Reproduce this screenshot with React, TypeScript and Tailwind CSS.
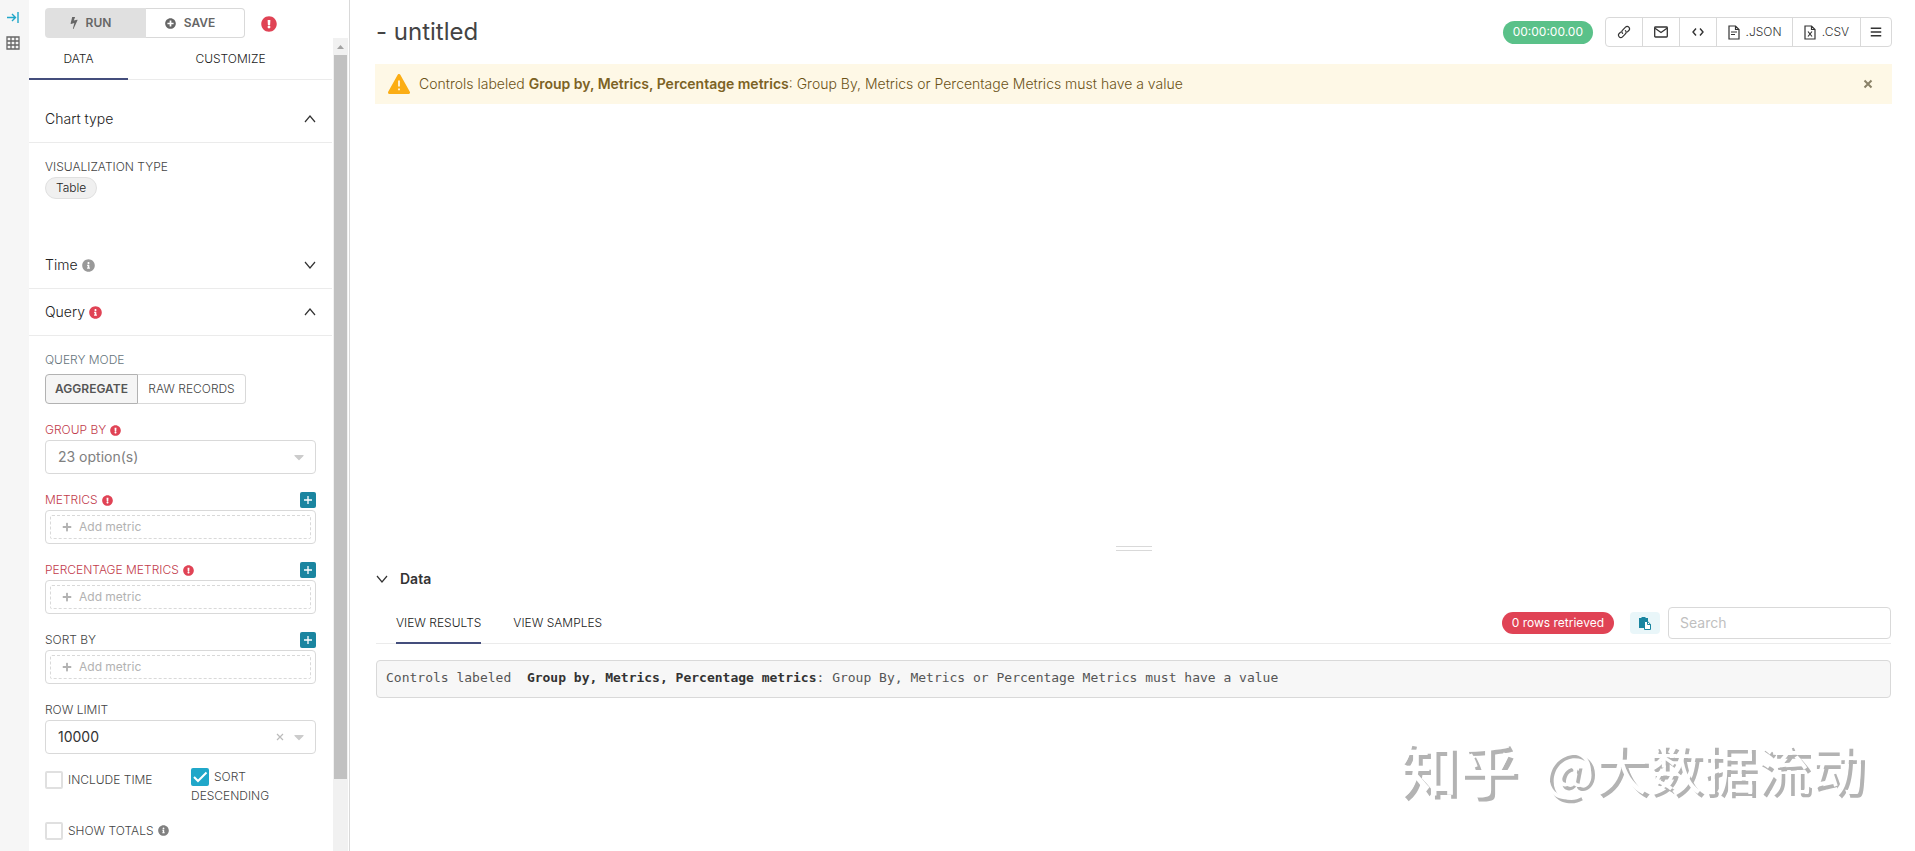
import type { ReactNode } from "react";
import { FaBars, FaCaretDown, FaExclamationCircle, FaInfoCircle, FaPlus, FaPlusCircle } from "react-icons/fa";

type ChevronProps = { up?: boolean };

function Chevron({ up }: ChevronProps) {
	return (
		<svg width="12" height="12" viewBox="0 0 12 12" fill="none" stroke="#333" strokeWidth="1.2">
			<path d={up ? "M1 9 6 3l5 6" : "M1 3l5 6 5-6"} />
		</svg>
	);
}

function BoltIcon() {
	return (
		<svg width="8" height="12" viewBox="0 0 8 12" fill="currentColor">
			<path d="M2.2 0h2.9L3.8 3.6l3.3-.8c.3-.1.5.2.4.5L3.6 11.8c-.1.3-.8.2-.7-.1l1.4-5.6-3.2.8c-.3.1-.6-.2-.5-.5L2.2 0Z" />
		</svg>
	);
}

function LinkIcon() {
	return (
		<svg width="14" height="14" viewBox="0 0 14 14" fill="none" stroke="currentColor" strokeWidth="1.2" strokeLinecap="round">
			<path d="M5.6 8.4c-1-1-1-2.3 0-3.3l2.9-2.9c1-1 2.4-1 3.3 0s1 2.3 0 3.3L10.4 6.9" />
			<path d="M8.4 5.6c1 1 1 2.3 0 3.3l-2.9 2.9c-1 1-2.4 1-3.3 0s-1-2.3 0-3.3L3.6 7.1" />
		</svg>
	);
}

function MailIcon() {
	return (
		<svg width="14" height="12" viewBox="0 0 14 12" fill="none" stroke="currentColor" strokeWidth="1.3">
			<rect x="0.7" y="1" width="12.6" height="10" rx="0.8" />
			<path d="m1 2.2 6 4.3 6-4.3" />
		</svg>
	);
}

function CodeIcon() {
	return (
		<svg width="14" height="10" viewBox="0 0 14 10" fill="none" stroke="currentColor" strokeWidth="1.4">
			<path d="M5 1.5 2 5l3 3.5M9 1.5 12 5 9 8.5" />
		</svg>
	);
}

function FileIcon({ children }: { children: ReactNode }) {
	return (
		<svg width="12" height="15" viewBox="0 0 12 15" fill="none" stroke="currentColor" strokeWidth="1.2">
			<path d="M1 1h6.5L11 4.5V14H1V1ZM7.5 1v3.5H11" />
			{children}
		</svg>
	);
}

function PasteIcon() {
	return (
		<svg width="12" height="13" viewBox="0 0 12 13">
			<path d="M0 1h2.5V0h4v1H9v10H0V1Z" fill="currentColor" />
			<path d="M5.5 4.5h3.200l2.800 2.800v5.200h-6v-8Z" fill="#fff" stroke="currentColor" />
			<path d="M8.500 4.500v3h3" fill="none" stroke="currentColor" />
		</svg>
	);
}

function WarningIcon() {
	return (
		<svg width="22" height="20" viewBox="0 0 22 20">
			<path d="M11 1.5 20.5 18.5h-19L11 1.5Z" fill="#fbad14" stroke="#fbad14" strokeWidth="3" strokeLinejoin="round" />
			<path d="M11 6.5v6M11 14.5v1.8" stroke="#fff" strokeWidth="1.6" />
		</svg>
	);
}

type SectionProps = { title: string; open?: boolean; icon?: ReactNode };

function SectionHeader({ title, open, icon }: SectionProps) {
	return (
		<button className="flex h-[47px] w-full items-center justify-between border-b border-[#ebebeb] px-4 text-sm text-[#222]">
			<span className="flex items-center gap-1">
				{title}
				{icon}
			</span>
			<Chevron up={open} />
		</button>
	);
}

function ErrorDot() {
	return <FaExclamationCircle className="size-[11px] text-[#e04355]" />;
}

type MetricProps = { label: string; error?: boolean };

function MetricControl({ label, error }: MetricProps) {
	return (
		<div className="mb-4">
			<div className="flex h-5 items-center justify-between">
				<span className={error ? "flex items-center gap-1 text-[#c23b4c]" : "text-[#444]"}>
					{label}
					{error && <ErrorDot />}
				</span>
				<button aria-label={`Add ${label}`} className="flex size-4 items-center justify-center rounded-xs bg-[#1a85a0] text-white">
					<svg width="8" height="8" viewBox="0 0 8 8" stroke="currentColor" strokeWidth="1.3">
						<path d="M4 0v8M0 4h8" />
					</svg>
				</button>
			</div>
			<div className="h-[34px] rounded-sm border border-[#d9d9d9] p-1">
				<button className="flex h-full w-full items-center gap-[7px] rounded-xs border border-dashed border-[#d9d9d9] px-[11px] font-normal text-[#b2b2b2]">
					<FaPlus className="size-[10px]" />
					Add metric
				</button>
			</div>
		</div>
	);
}

type CheckProps = { id: string; label: string; checked?: boolean; icon?: ReactNode };

function CheckControl({ id, label, checked, icon }: CheckProps) {
	return (
		<div className="text-[#444]">
			<span className="relative mr-[5px] inline-block size-[18px] align-middle">
				<input
					id={id}
					type="checkbox"
					defaultChecked={checked}
					className="block size-[18px] appearance-none rounded-xs border-2 border-[#e0e0e0] bg-white checked:border-[#20a7c9] checked:bg-[#20a7c9]"
				/>
				{checked && (
					<svg className="pointer-events-none absolute inset-0" width="18" height="18" viewBox="0 0 18 18" fill="none" stroke="#fff" strokeWidth="2">
						<path d="m3 9 4 4 8.5-8.5" />
					</svg>
				)}
			</span>
			<label htmlFor={id} className="align-middle">
				{label}
			</label>
			{icon}
		</div>
	);
}

function ControlPanel() {
	return (
		<aside className="flex w-[321px] shrink-0 flex-col border-r border-[#d9d9d9] bg-white text-xs">
			<div className="flex h-[38px] shrink-0 items-end pl-4">
				<div className="flex h-[30px] font-semibold text-[#666]">
					<button className="flex w-[101px] items-center justify-center gap-2 rounded-l-sm bg-[#e0e0e0] pr-[10px]">
						<BoltIcon />
						RUN
					</button>
					<button className="flex w-[99px] items-center justify-center gap-2 rounded-r-sm border border-l-0 border-[#d9d9d9] pr-[10px]">
						<FaPlusCircle className="size-[11px]" />
						SAVE
					</button>
				</div>
				<FaExclamationCircle className="mb-[6px] ml-4 size-4 text-[#e04355]" />
			</div>

			<div className="flex min-h-0 flex-1">
				<div className="min-w-0 flex-1 overflow-hidden pr-px">
					<div className="flex h-[42px] border-b border-[#ebebeb] text-[#222]">
						<button className="-mb-px w-[99px] border-b-2 border-[#444e7c] pt-[2px]">DATA</button>
						<button className="-mb-px ml-[53px] w-[99px] border-b-2 border-transparent pt-[2px]">CUSTOMIZE</button>
					</div>

					<div className="pt-4">
						<SectionHeader title="Chart type" open />
						<div className="h-[99px] px-4 pt-[15px] text-[#444]">
							<div className="mb-px leading-[18px]">VISUALIZATION TYPE</div>
							<button className="h-[22px] rounded-full border border-[#e0e0e0] bg-[#f0f0f0] px-[10px] text-[#222]">Table</button>
						</div>
						<SectionHeader title="Time" icon={<FaInfoCircle className="size-[13px] text-[#999]" />} />
						<SectionHeader title="Query" open icon={<FaInfoCircle className="size-[13px] text-[#e04355]" />} />
					</div>

					<div className="px-4 pt-[15px]">
						<div className="leading-[18px] text-[#66747c]">QUERY MODE</div>
						<div className="mt-[5px] mb-4 flex h-[30px] w-[201px] text-[#444]">
							<button className="w-[93px] rounded-l-sm border border-[#b2b2b2] bg-[#f5f5f5] font-semibold text-[#555]">AGGREGATE</button>
							<button className="flex-1 rounded-r-sm border border-l-0 border-[#d9d9d9]">RAW RECORDS</button>
						</div>

						<label htmlFor="group-by" className="flex h-5 items-center gap-1 text-[#c23b4c]">
							GROUP BY
							<ErrorDot />
						</label>
						<div className="mb-4 flex h-[34px] items-center rounded-sm border border-[#d9d9d9] pr-2 pl-3 text-sm">
							<select id="group-by" className="min-w-0 flex-1 appearance-none font-normal text-[#808080]">
								<option>23 option(s)</option>
							</select>
							<FaCaretDown className="size-4 text-[#ccc]" />
						</div>

						<MetricControl label="METRICS" error />
						<MetricControl label="PERCENTAGE METRICS" error />
						<MetricControl label="SORT BY" />

						<label htmlFor="row-limit" className="flex h-5 items-center text-[#444]">
							ROW LIMIT
						</label>
						<div className="mb-[13px] flex h-[34px] items-center rounded-sm border border-[#d9d9d9] pr-2 pl-3 text-sm">
							<select id="row-limit" className="min-w-0 flex-1 appearance-none font-normal text-[#333]">
								<option>10000</option>
							</select>
							<button aria-label="Clear row limit" className="mr-[7px] text-[#bbb]">
								<svg width="8" height="8" viewBox="0 0 8 8" stroke="currentColor" strokeWidth="1.2">
									<path d="m1 1 6 6M7 1 1 7" />
								</svg>
							</button>
							<FaCaretDown className="size-4 text-[#ccc]" />
						</div>

						<div className="mb-[18px] grid grid-cols-[146px_96px] leading-[17px]">
							<div className="pt-[3px]">
								<CheckControl id="include-time" label="INCLUDE TIME" />
							</div>
							<CheckControl id="sort-desc" label="SORT DESCENDING" checked />
						</div>
						<CheckControl
							id="show-totals"
							label="SHOW TOTALS"
							icon={<FaInfoCircle className="ml-1 inline-block size-[11px] text-[#808080]" />}
						/>
					</div>
				</div>

				<div className="flex w-[15px] shrink-0 flex-col bg-[#f1f1f1] px-px">
					<div className="flex h-[17px] shrink-0 items-center justify-center">
						<svg width="7" height="4" viewBox="0 0 7 4" fill="#a3a3a3">
							<path d="M3.5 0 7 4H0Z" />
						</svg>
					</div>
					<div className="min-h-0 flex-1">
						<div className="h-[91%] bg-[#c1c1c1]" />
					</div>
				</div>
				<div className="w-px shrink-0" />
			</div>
		</aside>
	);
}

function Toolbar() {
	const button = "flex items-center justify-center gap-[6px] border-r border-[#d9d9d9]";
	return (
		<div className="flex h-[30px] w-[287px] rounded-sm border border-[#d9d9d9] text-xs text-[#333]">
			<button aria-label="Copy link" className={`${button} w-[37px]`}>
				<LinkIcon />
			</button>
			<button aria-label="Email" className={`${button} w-[37px]`}>
				<MailIcon />
			</button>
			<button aria-label="Embed code" className={`${button} w-[37px]`}>
				<CodeIcon />
			</button>
			<button className={`${button} w-[76px]`}>
				<FileIcon>
					<path d="M3 7h6M3 9.5h4" />
				</FileIcon>
				.JSON
			</button>
			<button className={`${button} w-[68px]`}>
				<FileIcon>
					<path d="m4 6.5 4 5M8 6.5l-4 5" />
				</FileIcon>
				.CSV
			</button>
			<button aria-label="Menu" className="flex flex-1 items-center justify-center">
				<FaBars className="size-3" />
			</button>
		</div>
	);
}

function ResultsPanel() {
	return (
		<section className="pr-px">
			<button className="flex items-center gap-3 text-sm leading-5 font-semibold text-[#333]">
				<Chevron />
				Data
			</button>
			<div className="mt-[15px] flex h-10 items-stretch border-b border-[#ebebeb] text-xs text-[#222]">
				<div className="-mb-px ml-5 flex gap-8">
					<button className="border-b-2 border-[#444e7c]">VIEW RESULTS</button>
					<button className="border-b-2 border-transparent">VIEW SAMPLES</button>
				</div>
				<div className="ml-auto flex items-start">
					<span className="mt-[8px] flex h-[22px] items-center rounded-full bg-[#e04355] px-[10px] font-normal text-white">0 rows retrieved</span>
					<button aria-label="Copy to clipboard" className="mt-[8px] mr-2 ml-4 flex h-[22px] w-[30px] items-center justify-center rounded-sm bg-[#e9f6f9] text-[#1a85a0]">
						<PasteIcon />
					</button>
					<input
						type="text"
						aria-label="Search"
						placeholder="Search"
						className="mt-[3px] h-8 w-[223px] rounded-sm border border-[#d9d9d9] px-[11px] pb-px text-sm font-normal placeholder:text-[#bfbfbf]"
					/>
				</div>
			</div>
			<pre className="mt-4 rounded-sm border border-[#d9d9d9] bg-[#f7f7f7] px-[9px] pt-[7px] pb-[9px] font-['DejaVu_Sans_Mono',monospace] text-[13px] leading-5 text-[#555]">
				{"Controls labeled  "}
				<strong className="font-bold text-[#333]">Group by, Metrics, Percentage metrics</strong>
				{": Group By, Metrics or Percentage Metrics must have a value"}
			</pre>
		</section>
	);
}

export default function App() {
	return (
		<div className="relative flex h-screen overflow-hidden bg-white font-['Inter','Noto_Sans_CJK_SC',sans-serif] font-light">
			<nav className="flex w-[29px] shrink-0 flex-col bg-[#f6f6f6] pt-[10px] pl-[6px]">
				<button aria-label="Expand dataset panel" className="h-[26px] text-[#20a7c9]">
					<svg className="mb-3" width="13" height="12" viewBox="0 0 13 12" fill="none" stroke="currentColor" strokeWidth="1.4">
						<path d="M1 6.5h8M6 3l3.5 3.5L6 10M12 1v11" />
					</svg>
				</button>
				<button aria-label="Dataset" className="text-[#666]">
					<svg width="14" height="14" viewBox="0 0 14 14" fill="none" stroke="currentColor" strokeWidth="1.3">
						<path d="M1 1h12v12H1ZM5 1v12M9 1v12M1 5h12M1 9h12" />
					</svg>
				</button>
			</nav>

			<ControlPanel />

			<main className="flex min-w-0 flex-1 flex-col pr-[23px] pl-[26px]">
				<header className="flex h-16 items-center justify-between">
					<h1 className="text-2xl font-normal text-[#444]">- untitled</h1>
					<div className="flex items-center gap-3">
						<span className="flex h-[23px] items-center rounded-full bg-[#5ac189] px-[10px] text-xs font-normal text-white">00:00:00.00</span>
						<Toolbar />
					</div>
				</header>

				<div role="alert" className="-ml-px flex h-10 items-center gap-[9px] bg-[#fef8e6] px-[13px] pb-px text-sm text-[#6b5216]">
					<WarningIcon />
					<p className="flex-1">
						Controls labeled <strong className="font-semibold text-[#7c6224]">Group by, Metrics, Percentage metrics</strong>: Group By, Metrics or
						Percentage Metrics must have a value
					</p>
					<button aria-label="Close" className="mr-[6px] text-[#8a8268]">
						<svg width="10" height="10" viewBox="0 0 10 10" stroke="currentColor" strokeWidth="2">
							<path d="m1.5 1.5 7 7M8.5 1.5l-7 7" />
						</svg>
					</button>
				</div>

				<div className="flex flex-1 flex-col justify-end">
					<div className="mx-auto h-[5px] w-9 border-y border-[#d9d9d9]" />
				</div>
				<div className="h-[300px] shrink-0 pt-[18px]">
					<ResultsPanel />
				</div>
			</main>

			<div className="pointer-events-none absolute right-[51px] bottom-10 flex items-center gap-[26px] font-['Noto_Sans_CJK_SC',sans-serif] text-[54px] font-normal text-white [text-shadow:4px_4px_0_#b3b3b3]">
				<span className="text-[59px] font-medium">知乎</span>
				<span>@大数据流动</span>
			</div>
		</div>
	);
}
